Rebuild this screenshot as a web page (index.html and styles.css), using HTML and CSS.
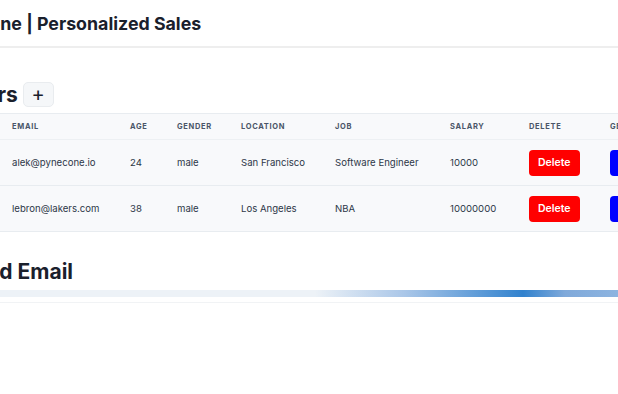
FILE: index.html
```html
<!DOCTYPE html>
<html lang="en">
<head>
    <meta charset="UTF-8">
    <meta name="viewport" content="width=device-width, initial-scale=1.0">
    <title>Pynecone | Personalized Sales</title>
    <link rel="stylesheet" href="styles.css">
</head>
<body>
    <header class="topbar">
        <h1 class="brand">Pynecone | Personalized Sales</h1>
    </header>

    <main class="content">
        <div class="section-head">
            <h2 class="heading">Customers</h2>
            <button class="add-btn" type="button">+</button>
        </div>

        <table class="customers">
            <colgroup>
                <col class="c-name">
                <col class="c-email">
                <col class="c-age">
                <col class="c-gender">
                <col class="c-location">
                <col class="c-job">
                <col class="c-salary">
                <col class="c-delete">
                <col class="c-generate">
            </colgroup>
            <thead>
                <tr>
                    <th>Name</th>
                    <th>Email</th>
                    <th>Age</th>
                    <th>Gender</th>
                    <th>Location</th>
                    <th>Job</th>
                    <th>Salary</th>
                    <th>Delete</th>
                    <th>Generate Email</th>
                </tr>
            </thead>
            <tbody>
                <tr>
                    <td>Alek</td>
                    <td>alek@pynecone.io</td>
                    <td>24</td>
                    <td>male</td>
                    <td>San Francisco</td>
                    <td>Software Engineer</td>
                    <td>10000</td>
                    <td><button class="btn btn-delete" type="button">Delete</button></td>
                    <td><button class="btn btn-generate" type="button">Generate Email</button></td>
                </tr>
                <tr>
                    <td>Lebron</td>
                    <td>lebron@lakers.com</td>
                    <td>38</td>
                    <td>male</td>
                    <td>Los Angeles</td>
                    <td>NBA</td>
                    <td>10000000</td>
                    <td><button class="btn btn-delete" type="button">Delete</button></td>
                    <td><button class="btn btn-generate" type="button">Generate Email</button></td>
                </tr>
            </tbody>
        </table>

        <h2 class="heading email-heading">Generated Email</h2>
        <div class="progress"></div>
        <div class="email-box"></div>
    </main>
</body>
</html>
```

FILE: styles.css
```css
body {
    margin: 0;
    overflow: hidden;
    font-family: Inter, "Noto Sans", sans-serif;
    color: #1a202c;
    background: #fff;
}

.topbar {
    height: 46px;
    border-bottom: 2px solid #eeeeee;
    display: flex;
    align-items: center;
}
.brand {
    margin: 0 0 0 -65px;
    font-size: 17.8px;
    font-weight: 700;
    white-space: nowrap;
}

.content {
    margin-left: -95px;
    width: 1000px;
}

.section-head {
    display: flex;
    align-items: center;
    gap: 5px;
    margin-top: 34px;
    height: 25px;
}
.heading {
    margin: 0;
    font-size: 21px;
    font-weight: 700;
    line-height: 1;
}
.add-btn {
    width: 31px;
    height: 25px;
    padding: 0 0 2px;
    border: 1px solid #e9ecef;
    border-radius: 5px;
    background: #f5f7f9;
    color: #1a202c;
    font-family: inherit;
    font-size: 20px;
    font-weight: 400;
    line-height: 1;
}

.customers {
    margin-top: 6px;
    border-collapse: collapse;
    table-layout: fixed;
    width: 780px;
    background: #f8f9fb;
    border-top: 1px solid #e8ecf0;
    font-size: 9.6px;
}
.c-name { width: 90px; }
.c-email { width: 118px; }
.c-age { width: 47px; }
.c-gender { width: 64px; }
.c-location { width: 94px; }
.c-job { width: 115px; }
.c-salary { width: 79px; }
.c-delete { width: 81px; }
.c-generate { width: 92px; }

.customers th {
    height: 25px;
    padding: 0 17px;
    text-align: left;
    font-size: 7.5px;
    font-weight: 700;
    letter-spacing: 0.09em;
    text-transform: uppercase;
    color: #4a5568;
    white-space: nowrap;
    border-bottom: 1px solid #edf0f3;
}
.customers td {
    height: 45px;
    padding: 0 17px;
    white-space: nowrap;
    border-bottom: 1px solid #e8ecf0;
    color: #2d3748;
}

.btn {
    height: 26px;
    padding: 0 9px;
    border: none;
    border-radius: 4px;
    color: #fff;
    font-family: inherit;
    font-size: 10.5px;
    font-weight: 600;
    white-space: nowrap;
}
.btn-delete {
    background: #ff0000;
}
.btn-generate {
    background: #0000ff;
}

.email-heading {
    margin-top: 29px;
    line-height: 22px;
}
.progress {
    margin-top: 7px;
    height: 7px;
    width: 713px;
    background: linear-gradient(to right, #edf2f7 0, #edf2f7 410px, #a9c6e8 500px, #3182ce 618px, #7fa9da 660px, #8db4e0 713px);
}
.email-box {
    margin-top: 5px;
    height: 40px;
    border-top: 1px solid #f1f3f5;
}
```
